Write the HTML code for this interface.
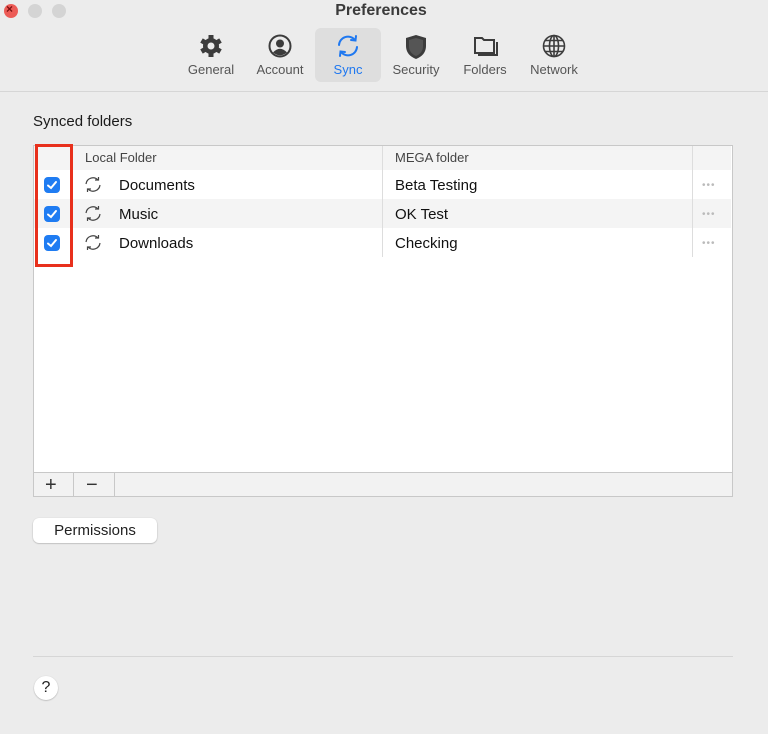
<!DOCTYPE html>
<html><head><style>
*{margin:0;padding:0;box-sizing:border-box}
body{width:768px;height:734px;background:#ececec;font-family:"Liberation Sans",sans-serif;position:relative;overflow:hidden;color:#222}
.a{position:absolute}
.tl{width:14px;height:14px;border-radius:50%;top:4px}
.lbl{font-size:13px;color:#555;top:62px;width:80px;text-align:center}
.ic{top:34px}
.row{position:absolute;left:34px;width:697px;height:29px}
.cb{position:absolute;left:10px;top:7px;width:16px;height:16px;background:#1f7cf2;border-radius:4px}
.cb svg{position:absolute;left:2px;top:2px}
.nm{position:absolute;left:85px;top:7px;font-size:15px;color:#111}
.mg{position:absolute;left:361px;top:7px;font-size:15px;color:#111}
.dots{position:absolute;left:668px;top:10px;font-size:10px;color:#bbb;letter-spacing:1px}
.sy{position:absolute;left:50px;top:6px}
</style></head><body>
<div class="a tl" style="left:4px;background:#ec5b56"></div>
<div class="a" style="left:6px;top:2px;font-size:12px;color:#7a1010;font-weight:bold">×</div>
<div class="a tl" style="left:28px;background:#d4d4d4"></div>
<div class="a tl" style="left:52px;background:#d4d4d4"></div>
<div class="a" style="left:-3px;top:2px;width:768px;text-align:center;font-size:16px;font-weight:bold;color:#3a3a3a">Preferences</div>
<div class="a" style="left:315px;top:28px;width:66px;height:54px;background:#dedede;border-radius:6px"></div>
<svg class="a ic" style="left:199px" width="24" height="24" viewBox="0 0 24 24"><g fill="#3c3c3c"><circle cx="12" cy="12" r="8"/><g stroke="#3c3c3c" stroke-width="5"><line x1="12" y1="1" x2="12" y2="23"/><line x1="2.5" y1="6.5" x2="21.5" y2="17.5"/><line x1="2.5" y1="17.5" x2="21.5" y2="6.5"/></g></g><circle cx="12" cy="12" r="3.5" fill="#ececec"/></svg>
<svg class="a ic" style="left:268px" width="24" height="24" viewBox="0 0 24 24"><circle cx="12" cy="12" r="10.5" fill="none" stroke="#3c3c3c" stroke-width="2"/><circle cx="12" cy="9.5" r="4" fill="#3c3c3c"/><path d="M5 18.5Q12 11 19 18.5Q12 24 5 18.5Z" fill="#3c3c3c"/></svg>
<svg class="a ic" style="left:336px" width="24" height="24" viewBox="0 0 24 24" fill="none" stroke="#1f78f0" stroke-width="2" stroke-linecap="round"><path d="M3 11A9 9 0 0 1 19 6"/><path d="M21 13A9 9 0 0 1 5 18"/><path d="M15 6L19.5 6.5L20 2" /><path d="M9 18L4.5 17.5L4 22"/></svg>
<svg class="a ic" style="left:404px" width="24" height="26" viewBox="0 0 24 26"><path d="M12 1L22 4V12Q22 21 12 25Q2 21 2 12V4Z" fill="#3c3c3c"/><path d="M12 4L19 6V12Q19 19 12 22Q5 19 5 12V6Z" fill="#555"/></svg>
<svg class="a ic" style="left:473px" width="26" height="24" viewBox="0 0 26 24" fill="none" stroke="#3c3c3c" stroke-width="2"><path d="M2 4H9L11 6H21V19H2Z"/><path d="M5 21H24V8" /></svg>
<svg class="a ic" style="left:542px" width="24" height="24" viewBox="0 0 24 24" fill="none" stroke="#3c3c3c" stroke-width="1.6"><circle cx="12" cy="12" r="10.5"/><ellipse cx="12" cy="12" rx="4.5" ry="10.5"/><line x1="12" y1="1.5" x2="12" y2="22.5"/><line x1="1.5" y1="12" x2="22.5" y2="12"/><path d="M3.5 6.5H20.5M3.5 17.5H20.5"/></svg>
<div class="a lbl" style="left:171px">General</div>
<div class="a lbl" style="left:240px">Account</div>
<div class="a lbl" style="left:308px;color:#1f78f0">Sync</div>
<div class="a lbl" style="left:376px">Security</div>
<div class="a lbl" style="left:445px">Folders</div>
<div class="a lbl" style="left:514px">Network</div>
<div class="a" style="left:0;top:91px;width:768px;height:1px;background:#d6d6d6"></div>
<div class="a" style="left:33px;top:113px;font-size:15px;color:#1a1a1a">Synced folders</div>
<div class="a" style="left:33px;top:145px;width:700px;height:352px;background:#fff;border:1px solid #c8c8c8"></div>
<div class="a" style="left:34px;top:146px;width:697px;height:24px;background:#f4f4f4"></div>
<div class="a" style="left:85px;top:150px;font-size:13px;color:#444">Local Folder</div>
<div class="a" style="left:395px;top:150px;font-size:13px;color:#444">MEGA folder</div>
<div class="row" style="top:170px;background:#fff"><div class="cb"><svg width="12" height="12" viewBox="0 0 12 12"><path d="M2 6.5L5 9L10 3" fill="none" stroke="#fff" stroke-width="2" stroke-linecap="round"/></svg></div><svg class="sy" width="18" height="17" viewBox="0 0 18 17" fill="none" stroke="#444" stroke-width="1.2"><path d="M2 8A7 7 0 0 1 14 4"/><path d="M16 9A7 7 0 0 1 4 13"/><path d="M11 4H14.5V1"/><path d="M7 13H3.5V16"/></svg><div class="nm">Documents</div><div class="mg">Beta Testing</div><div class="dots">•••</div></div>
<div class="row" style="top:199px;background:#f4f4f4"><div class="cb"><svg width="12" height="12" viewBox="0 0 12 12"><path d="M2 6.5L5 9L10 3" fill="none" stroke="#fff" stroke-width="2" stroke-linecap="round"/></svg></div><svg class="sy" width="18" height="17" viewBox="0 0 18 17" fill="none" stroke="#444" stroke-width="1.2"><path d="M2 8A7 7 0 0 1 14 4"/><path d="M16 9A7 7 0 0 1 4 13"/><path d="M11 4H14.5V1"/><path d="M7 13H3.5V16"/></svg><div class="nm">Music</div><div class="mg">OK Test</div><div class="dots">•••</div></div>
<div class="row" style="top:228px;background:#fff"><div class="cb"><svg width="12" height="12" viewBox="0 0 12 12"><path d="M2 6.5L5 9L10 3" fill="none" stroke="#fff" stroke-width="2" stroke-linecap="round"/></svg></div><svg class="sy" width="18" height="17" viewBox="0 0 18 17" fill="none" stroke="#444" stroke-width="1.2"><path d="M2 8A7 7 0 0 1 14 4"/><path d="M16 9A7 7 0 0 1 4 13"/><path d="M11 4H14.5V1"/><path d="M7 13H3.5V16"/></svg><div class="nm">Downloads</div><div class="mg">Checking</div><div class="dots">•••</div></div>
<div class="a" style="left:382px;top:146px;width:1px;height:111px;background:#ddd"></div>
<div class="a" style="left:692px;top:146px;width:1px;height:111px;background:#ddd"></div>
<div class="a" style="left:35px;top:144px;width:38px;height:123px;border:3px solid #e8301c"></div>
<div class="a" style="left:33px;top:472px;width:700px;height:25px;background:#f2f2f2;border:1px solid #c8c8c8"></div>
<div class="a" style="left:73px;top:473px;width:1px;height:23px;background:#c8c8c8"></div>
<div class="a" style="left:114px;top:473px;width:1px;height:23px;background:#c8c8c8"></div>
<div class="a" style="left:45px;top:474px;font-size:20px;color:#333">+</div>
<div class="a" style="left:86px;top:474px;font-size:20px;color:#333">−</div>
<div class="a" style="left:33px;top:518px;width:124px;height:25px;background:#fff;border-radius:6px;box-shadow:0 0.5px 1.5px rgba(0,0,0,.3);text-align:center;font-size:15px;line-height:25px;color:#222">Permissions</div>
<div class="a" style="left:33px;top:656px;width:700px;height:1px;background:#d6d6d6"></div>
<div class="a" style="left:34px;top:676px;width:24px;height:24px;border-radius:50%;background:#fff;box-shadow:0 0.5px 1.5px rgba(0,0,0,.3);text-align:center;font-size:16px;line-height:24px;color:#222">?</div>
</body></html>
